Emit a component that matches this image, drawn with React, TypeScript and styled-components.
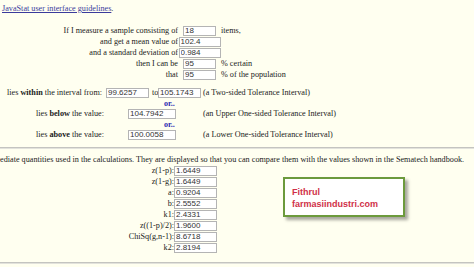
import { createGlobalStyle, styled } from 'styled-components';

const GlobalStyle = createGlobalStyle`
  html, body {
    margin: 0;
    padding: 0;
    background: #fffff0;
  }
  body {
    font-family: "Liberation Serif", "Times New Roman", serif;
    font-size: 8.2px;
    color: #222;
  }
`;

const quantities = [
  { label: 'z(1-p):', value: '1.6449' },
  { label: 'z(1-g):', value: '1.6449' },
  { label: 'a:', value: '0.9204' },
  { label: 'b:', value: '2.5552' },
  { label: 'k1:', value: '2.4331' },
  { label: 'z((1-p)/2):', value: '1.9600' },
  { label: 'ChiSq(g,n-1):', value: '8.6718' },
  { label: 'k2:', value: '2.8194' },
];

const Field = ({ value, width }: { value: string; width: number }) => (
  <S.Input readOnly value={value} $width={width} />
);

const App = () => {
  return (
    <S.Page>
      <GlobalStyle />
      <S.LinkLine>
        <S.Link href="#">JavaStat user interface guidelines</S.Link>.
      </S.LinkLine>

      <S.SampleGrid>
        <S.Label>If I measure a sample consisting of</S.Label>
        <S.Cell><Field value="18" width={33} /></S.Cell>
        <S.After>items,</S.After>

        <S.Label>and get a mean value of</S.Label>
        <S.Cell><Field value="102.4" width={42} /></S.Cell>
        <S.After />

        <S.Label>and a standard deviation of</S.Label>
        <S.Cell><Field value="0.984" width={42} /></S.Cell>
        <S.After />

        <S.Label>then I can be</S.Label>
        <S.Cell><Field value="95" width={33} /></S.Cell>
        <S.After>% certain</S.After>

        <S.Label>that</S.Label>
        <S.Cell><Field value="95" width={33} /></S.Cell>
        <S.After>% of the population</S.After>
      </S.SampleGrid>

      <S.Intervals>
        <S.WithinRow>
          <span>
            lies <b>within</b> the interval from:
          </span>
          <Field value="99.6257" width={43} />
          <S.To>to</S.To>
          <Field value="105.1743" width={43} />
          <span>(a Two-sided Tolerance Interval)</span>
        </S.WithinRow>
        <S.Or>or..</S.Or>
        <S.ValueRow>
          <span>
            lies <b>below</b> the value:
          </span>
          <Field value="104.7942" width={48} />
          <span>(an Upper One-sided Tolerance Interval)</span>
        </S.ValueRow>
        <S.Or>or..</S.Or>
        <S.ValueRow>
          <span>
            lies <b>above</b> the value:
          </span>
          <Field value="100.0058" width={48} />
          <span>(a Lower One-sided Tolerance Interval)</span>
        </S.ValueRow>
      </S.Intervals>

      <S.Rule $gap={7} />

      <S.Note>
        ediate quantities used in the calculations. They are displayed so that you can compare them
        with the values shown in the Sematech handbook.
      </S.Note>

      <S.QuantityGrid>
        {quantities.map(q => (
          <S.QuantityRow key={q.label}>
            <S.QLabel>{q.label}</S.QLabel>
            <Field value={q.value} width={43} />
          </S.QuantityRow>
        ))}
      </S.QuantityGrid>

      <S.Rule $gap={9} />

      <S.Watermark>
        Fithrul
        <br />
        farmasiindustri.com
      </S.Watermark>
    </S.Page>
  );
};

export default App;

const S = {
  Page: styled.div`
    position: relative;
    width: 474px;
    height: 267px;
    overflow: hidden;
    background: #fffff0;
  `,
  LinkLine: styled.div`
    padding: 4px 0 0 2px;
    height: 11px;
    line-height: 10px;
  `,
  Link: styled.a`
    color: #3b3b9c;
    text-decoration: underline;
  `,
  SampleGrid: styled.div`
    display: grid;
    grid-template-columns: 178px 43px auto;
    grid-auto-rows: 11px;
    margin-top: 10px;
    align-items: center;
  `,
  Label: styled.div`
    text-align: right;
    white-space: nowrap;
  `,
  Cell: styled.div`
    display: flex;
    justify-content: center;
  `,
  After: styled.div`
    white-space: nowrap;
  `,
  Input: styled.input<{ $width: number }>`
    box-sizing: border-box;
    width: ${p => p.$width}px;
    height: 10px;
    margin: 0;
    padding: 0 1px;
    border: 1px solid #b4b4b4;
    background: #fff;
    font-family: "Liberation Sans", Arial, sans-serif;
    font-size: 8px;
    color: #333;
    outline: none;
  `,
  Intervals: styled.div`
    margin-top: 7px;
  `,
  WithinRow: styled.div`
    display: grid;
    grid-template-columns: 99px 43px 9px 43px auto;
    align-items: center;
    height: 11px;
    padding-left: 7px;
    white-space: nowrap;
    & > span:last-child {
      padding-left: 2px;
    }
  `,
  To: styled.span`
    padding-left: 3px;
  `,
  Or: styled.div`
    height: 10px;
    line-height: 11px;
    padding-left: 164px;
    color: #2b2bb0;
    font-weight: bold;
    font-size: 8px;
  `,
  ValueRow: styled.div`
    display: grid;
    grid-template-columns: 92px 48px auto;
    align-items: center;
    height: 11px;
    padding-left: 36px;
    white-space: nowrap;
    & > span:last-child {
      padding-left: 27px;
    }
  `,
  Rule: styled.hr<{ $gap: number }>`
    margin: ${p => p.$gap}px 0 0;
    height: 0;
    border: none;
    border-top: 1px solid #c4c4c0;
    border-bottom: 1px solid #e2e2dc;
  `,
  Note: styled.div`
    margin-top: 5px;
    height: 11px;
    line-height: 11px;
    white-space: nowrap;
  `,
  QuantityGrid: styled.div`
    display: flex;
    flex-direction: column;
  `,
  QuantityRow: styled.div`
    display: grid;
    grid-template-columns: 174px 43px;
    align-items: center;
    height: 11px;
  `,
  QLabel: styled.span`
    text-align: right;
    white-space: nowrap;
  `,
  Watermark: styled.div`
    position: absolute;
    left: 283px;
    top: 177px;
    width: 122px;
    height: 40px;
    box-sizing: border-box;
    padding: 7px 0 0 7px;
    background: #fff;
    border: 2px solid #6c9a3c;
    box-shadow: 3px 3px 3px rgba(0, 0, 0, 0.35);
    color: #d03048;
    font-family: "Liberation Sans", Arial, sans-serif;
    font-weight: bold;
    font-size: 9px;
    line-height: 12px;
  `,
};
